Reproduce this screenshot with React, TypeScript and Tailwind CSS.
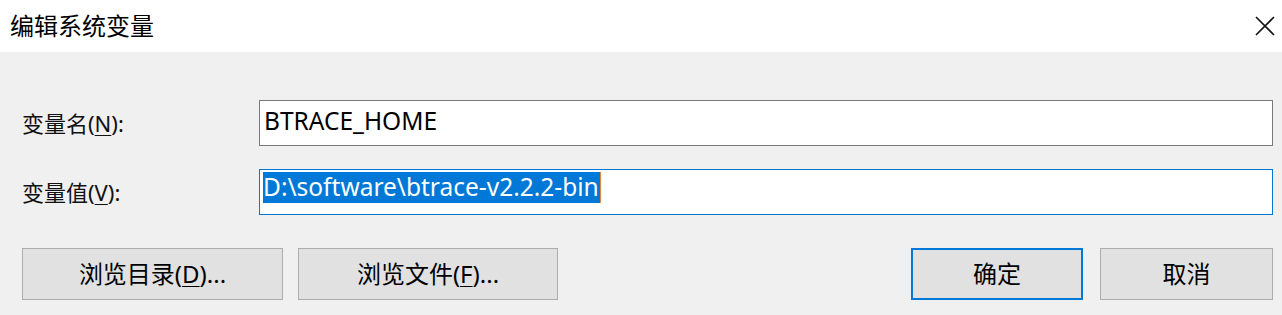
import React from "react";

const font = { fontFamily: '"Noto Sans", "Noto Sans CJK SC", sans-serif' };

function Btn({ children, w, primary }: { children: React.ReactNode; w: string; primary?: boolean }) {
  return (
    <div
      className={`${w} h-[52px] flex items-center justify-center bg-[#e1e1e1] text-[24px] text-black leading-none ${
        primary ? "border-2 border-[#0078d7]" : "border border-[#adadad]"
      }`}
    >
      {children}
    </div>
  );
}

export default function App() {
  return (
    <div className="w-[1282px] h-[315px] overflow-hidden flex flex-col bg-[#f0f0f0]" style={font}>
      <div className="h-[52px] bg-white flex items-center justify-between pl-[10px] pr-[7px] shrink-0">
        <span className="text-[24px] text-black leading-none">编辑系统变量</span>
        <svg width="20" height="20" viewBox="0 0 20 20">
          <path d="M1 1 L19 19 M19 1 L1 19" stroke="#111" strokeWidth="1.6" fill="none" />
        </svg>
      </div>
      <div className="flex flex-col pt-[48px] pr-[9px]">
        <div className="flex items-center">
          <div className="w-[259px] pl-[22px] text-[22px] text-[#111] leading-none">
            变量名(<span className="underline underline-offset-[3px] decoration-1">N</span>):
          </div>
          <div className="flex-1 h-[46px] bg-white border border-[#7a7a7a] flex items-center pl-[4px] pb-[4px]">
            <span className="text-[24.5px] text-black leading-none">BTRACE_HOME</span>
          </div>
        </div>
        <div className="flex items-center mt-[23px]">
          <div className="w-[259px] pl-[22px] text-[22px] text-[#111] leading-none">
            变量值(<span className="underline underline-offset-[3px] decoration-1">V</span>):
          </div>
          <div className="flex-1 h-[46px] bg-white border border-[#0078d7] flex items-start pl-[3px] pt-[2px]">
            <span className="h-[31px] flex items-center bg-[#0078d7] text-white text-[24.5px] leading-none pr-[1px] border-r border-[#e8863a]">
              D:\software\btrace-v2.2.2-bin
            </span>
          </div>
        </div>
        <div className="flex items-center mt-[33px] pl-[22px]">
          <Btn w="w-[261px]">
            浏览目录(<span className="underline underline-offset-[3px] decoration-1">D</span>)...
          </Btn>
          <div className="w-[15px]" />
          <Btn w="w-[260px]">
            浏览文件(<span className="underline underline-offset-[3px] decoration-1">F</span>)...
          </Btn>
          <div className="flex-1" />
          <Btn w="w-[172px]" primary>
            确定
          </Btn>
          <div className="w-[17px]" />
          <Btn w="w-[173px]">取消</Btn>
        </div>
      </div>
    </div>
  );
}
